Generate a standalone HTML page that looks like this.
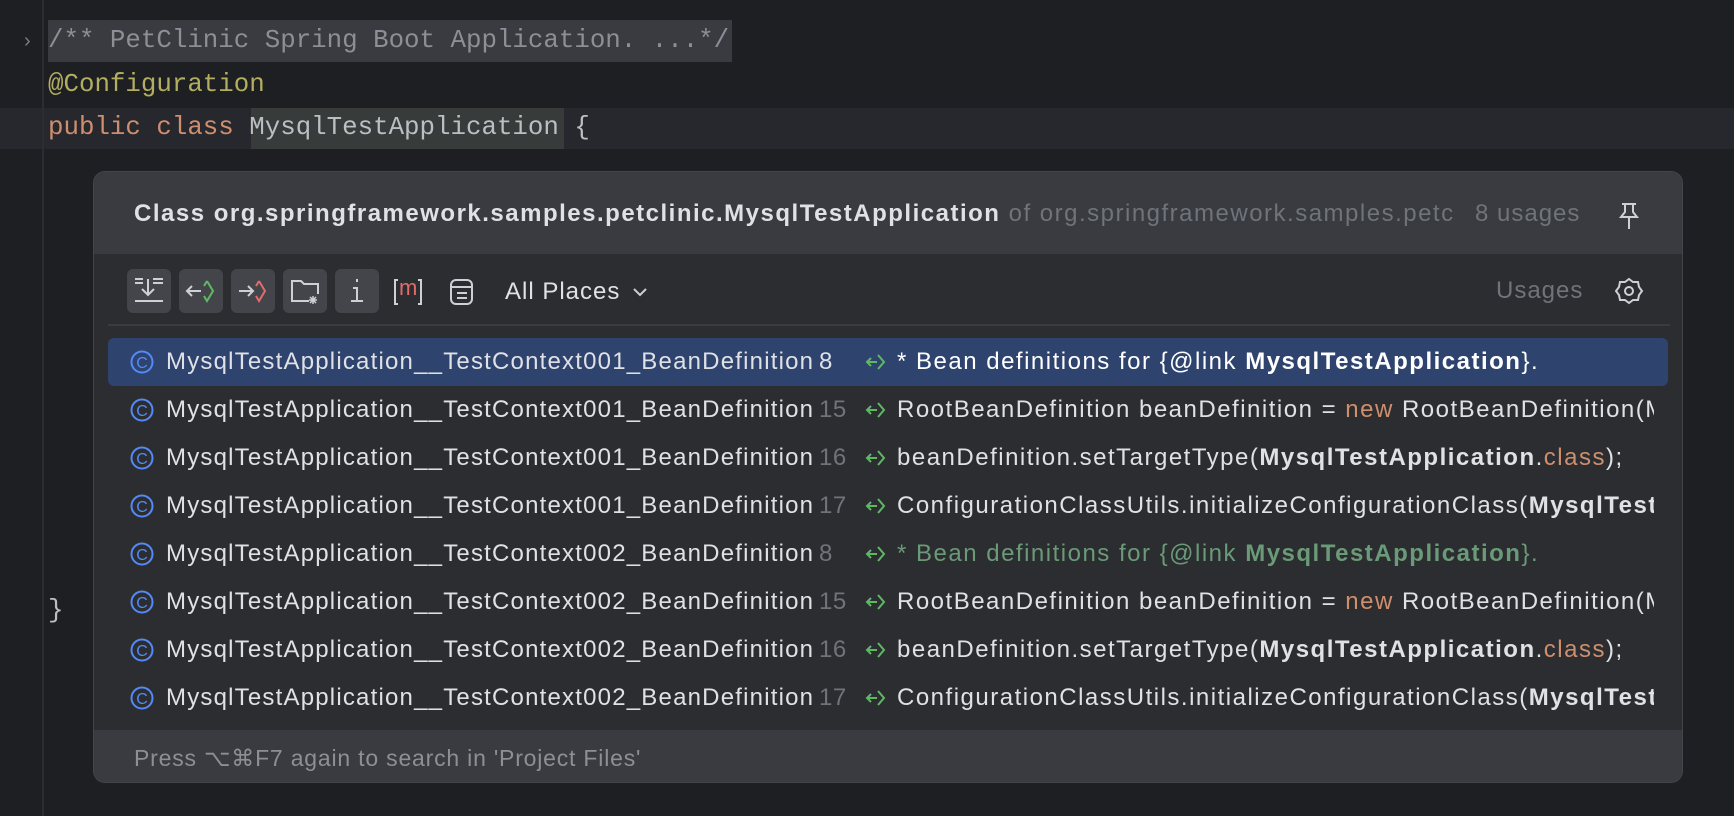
<!DOCTYPE html>
<html><head><meta charset="utf-8"><style>
*{margin:0;padding:0;box-sizing:border-box}
body{width:1734px;height:816px;background:#1e1f22;position:relative;overflow:hidden;font-family:"Liberation Sans",sans-serif}
.abs{position:absolute}
.code{font-family:"Liberation Mono",monospace;font-size:25.8px;white-space:pre;line-height:44px}
.popup{left:93px;top:171px;width:1590px;height:612px;background:#2b2d30;border-radius:12px;border:1px solid #43454a;overflow:hidden}
.hdr{left:0;top:0;width:100%;height:82px;background:#393b40}
.btn{top:97px;width:44px;height:44px;background:#43454a;border-radius:6px}
.btn svg{position:absolute;left:0;top:0}
.row{left:14px;width:1560px;height:48px;font-size:24px;line-height:48px;color:#dfe1e5}
.row .ic{position:absolute;left:22px;top:12px}
.row .nm{position:absolute;left:58px;width:648px;overflow:hidden;white-space:nowrap;letter-spacing:1.2px}
.row .ln{position:absolute;left:711px;color:#6f737a;letter-spacing:0.5px}
.row .ar{position:absolute;left:757px;top:13px}
.row .sn{position:absolute;left:789px;width:757px;overflow:hidden;white-space:nowrap;letter-spacing:1.5px}
.row b{color:#dfe1e5}
.k{color:#cf8e6d}
</style></head><body>
<div class="abs" style="left:0;top:108px;width:1734px;height:41px;background:#26282e"></div>
<div class="abs" style="left:42px;top:0;width:2px;height:816px;background:#2b2d30"></div>
<div class="abs" style="left:24px;top:30px;color:#7a7e85;font-size:20px">&#x203A;</div>
<div class="abs" style="left:48px;top:20px;width:684px;height:42px;background:#393b40"></div>
<div class="abs code" style="left:48px;top:19px;color:#8c8f96">/** PetClinic Spring Boot Application. ...*/</div>
<div class="abs code" style="left:48px;top:63px;color:#b3ae60">@Configuration</div>
<div class="abs" style="left:251px;top:108px;width:313px;height:41px;background:#373b39"></div>
<div class="abs code" style="left:48px;top:106px;color:#bcbec4"><span class="k">public class </span>MysqlTestApplication {</div>
<div class="abs code" style="left:48px;top:589px;color:#bcbec4">}</div>

<div class="abs popup">
 <div class="abs hdr"></div>
 <div class="abs" style="left:40px;top:28px;font-size:24px;letter-spacing:1.5px;color:#dfe1e5;white-space:nowrap;width:1319px;overflow:hidden"><b>Class org.springframework.samples.petclinic.MysqlTestApplication</b> <span style="color:#6f737a">of org.springframework.samples.petclinic</span></div>
 <div class="abs" style="left:1381px;top:28px;font-size:24px;letter-spacing:1px;color:#6f737a">8 usages</div>
 <svg class="abs" style="left:1523px;top:30px" width="24" height="30" viewBox="0 0 24 30" fill="none" stroke="#ced0d6" stroke-width="2"><path d="M5 2h14M8 2v8l-4 5h16l-4-5V2M12 15v12"/></svg>

 <div class="abs btn" style="left:33px"><svg width="44" height="44" fill="none" stroke="#ced0d6" stroke-width="2"><path d="M8 10h8M8 14h8M26 10h10M26 14h10M21 10v16M15 20l6 6 6-6M8 32h28"/></svg></div>
 <div class="abs btn" style="left:85px"><svg width="44" height="44" fill="none" stroke-width="2"><path d="M8 22h14M13 17l-5 5 5 5" stroke="#ced0d6"/><path d="M28 12l6 10-6 10-3-5M25 17l3-5" stroke="#5fb865"/></svg></div>
 <div class="abs btn" style="left:137px"><svg width="44" height="44" fill="none" stroke-width="2"><path d="M8 22h14M17 17l5 5-5 5" stroke="#ced0d6"/><path d="M28 12l6 10-6 10-3-5M25 17l3-5" stroke="#e06c6c"/></svg></div>
 <div class="abs btn" style="left:189px"><svg width="44" height="44" fill="none" stroke="#ced0d6" stroke-width="2"><path d="M26 32H9V12h9l3 3h14v10"/><path d="M30 27v8M26 31h8M27 28l6 6M33 28l-6 6" stroke-width="1.5"/></svg></div>
 <div class="abs btn" style="left:241px"><svg width="44" height="44" fill="none" stroke="#ced0d6" stroke-width="2"><path d="M22 10v3M18 19h4v13M16 32h12"/></svg></div>
 <svg class="abs" style="left:298px;top:104px" width="32" height="32" fill="none" stroke="#ced0d6" stroke-width="2"><path d="M6 4H3v24h3M26 4h3v24h-3"/></svg>
 <div class="abs" style="left:305px;top:103px;font-size:22px;color:#e06c6c">m</div>
 <svg class="abs" style="left:353px;top:105px" width="30" height="30" fill="none" stroke="#ced0d6" stroke-width="2"><rect x="4" y="3" width="21" height="24" rx="5"/><path d="M4 10h21M10 16h10M10 21h10"/></svg>
 <div class="abs" style="left:411px;top:106px;font-size:24px;letter-spacing:1px;color:#dfe1e5">All Places</div>
 <svg class="abs" style="left:538px;top:114px" width="16" height="12" fill="none" stroke="#ced0d6" stroke-width="2"><path d="M2 3l6 6 6-6"/></svg>
 <div class="abs" style="left:1402px;top:105px;font-size:24px;letter-spacing:1px;color:#6f737a">Usages</div>
 <svg class="abs" style="left:1520px;top:104px" width="30" height="30" fill="none" stroke="#ced0d6" stroke-width="2"><path d="M15 3l4 3 5 0 1 5 3 4-3 4-1 5-5 0-4 3-4-3-5 0-1-5-3-4 3-4 1-5 5 0z"/><circle cx="15" cy="15" r="4"/></svg>
 <div class="abs" style="left:14px;top:152px;width:1562px;height:2px;background:#393b40"></div>

 <div class="abs row" style="top:166px;background:#2e436e;border-radius:6px">
  <svg class="ic" width="24" height="24"><circle cx="12" cy="12" r="10.5" fill="none" stroke="#548af7" stroke-width="2"/><text x="12" y="18" font-size="16" fill="#548af7" text-anchor="middle" font-family="Liberation Sans">C</text></svg>
  <span class="nm">MysqlTestApplication__TestContext001_BeanDefinitions</span><span class="ln" style="color:#dfe1e5">8</span>
  <svg class="ar" width="22" height="22" fill="none" stroke="#5fb865" stroke-width="2"><path d="M2 11h10M6 7l-4 4 4 4M13 4l6 7-6 7"/></svg>
  <span class="sn" style="color:#fff">* Bean definitions for {@link <b style="color:#fff">MysqlTestApplication</b>}.</span></div>

 <div class="abs row" style="top:214px"><svg class="ic" width="24" height="24"><circle cx="12" cy="12" r="10.5" fill="none" stroke="#548af7" stroke-width="2"/><text x="12" y="18" font-size="16" fill="#548af7" text-anchor="middle" font-family="Liberation Sans">C</text></svg><span class="nm">MysqlTestApplication__TestContext001_BeanDefinitions</span><span class="ln">15</span><svg class="ar" width="22" height="22" fill="none" stroke="#5fb865" stroke-width="2"><path d="M2 11h10M6 7l-4 4 4 4M13 4l6 7-6 7"/></svg><span class="sn">RootBeanDefinition beanDefinition = <span class="k">new</span> RootBeanDefinition(MysqlTestApplication.class);</span></div>

 <div class="abs row" style="top:262px"><svg class="ic" width="24" height="24"><circle cx="12" cy="12" r="10.5" fill="none" stroke="#548af7" stroke-width="2"/><text x="12" y="18" font-size="16" fill="#548af7" text-anchor="middle" font-family="Liberation Sans">C</text></svg><span class="nm">MysqlTestApplication__TestContext001_BeanDefinitions</span><span class="ln">16</span><svg class="ar" width="22" height="22" fill="none" stroke="#5fb865" stroke-width="2"><path d="M2 11h10M6 7l-4 4 4 4M13 4l6 7-6 7"/></svg><span class="sn">beanDefinition.setTargetType(<b>MysqlTestApplication</b>.<span class="k">class</span>);</span></div>

 <div class="abs row" style="top:310px"><svg class="ic" width="24" height="24"><circle cx="12" cy="12" r="10.5" fill="none" stroke="#548af7" stroke-width="2"/><text x="12" y="18" font-size="16" fill="#548af7" text-anchor="middle" font-family="Liberation Sans">C</text></svg><span class="nm">MysqlTestApplication__TestContext001_BeanDefinitions</span><span class="ln">17</span><svg class="ar" width="22" height="22" fill="none" stroke="#5fb865" stroke-width="2"><path d="M2 11h10M6 7l-4 4 4 4M13 4l6 7-6 7"/></svg><span class="sn">ConfigurationClassUtils.initializeConfigurationClass(<b>MysqlTestApplication</b>.class);</span></div>

 <div class="abs row" style="top:358px"><svg class="ic" width="24" height="24"><circle cx="12" cy="12" r="10.5" fill="none" stroke="#548af7" stroke-width="2"/><text x="12" y="18" font-size="16" fill="#548af7" text-anchor="middle" font-family="Liberation Sans">C</text></svg><span class="nm">MysqlTestApplication__TestContext002_BeanDefinitions</span><span class="ln">8</span><svg class="ar" width="22" height="22" fill="none" stroke="#5fb865" stroke-width="2"><path d="M2 11h10M6 7l-4 4 4 4M13 4l6 7-6 7"/></svg><span class="sn" style="color:#6a9a78">* Bean definitions for {@link <b style="color:#6a9a78">MysqlTestApplication</b>}.</span></div>

 <div class="abs row" style="top:406px"><svg class="ic" width="24" height="24"><circle cx="12" cy="12" r="10.5" fill="none" stroke="#548af7" stroke-width="2"/><text x="12" y="18" font-size="16" fill="#548af7" text-anchor="middle" font-family="Liberation Sans">C</text></svg><span class="nm">MysqlTestApplication__TestContext002_BeanDefinitions</span><span class="ln">15</span><svg class="ar" width="22" height="22" fill="none" stroke="#5fb865" stroke-width="2"><path d="M2 11h10M6 7l-4 4 4 4M13 4l6 7-6 7"/></svg><span class="sn">RootBeanDefinition beanDefinition = <span class="k">new</span> RootBeanDefinition(MysqlTestApplication.class);</span></div>

 <div class="abs row" style="top:454px"><svg class="ic" width="24" height="24"><circle cx="12" cy="12" r="10.5" fill="none" stroke="#548af7" stroke-width="2"/><text x="12" y="18" font-size="16" fill="#548af7" text-anchor="middle" font-family="Liberation Sans">C</text></svg><span class="nm">MysqlTestApplication__TestContext002_BeanDefinitions</span><span class="ln">16</span><svg class="ar" width="22" height="22" fill="none" stroke="#5fb865" stroke-width="2"><path d="M2 11h10M6 7l-4 4 4 4M13 4l6 7-6 7"/></svg><span class="sn">beanDefinition.setTargetType(<b>MysqlTestApplication</b>.<span class="k">class</span>);</span></div>

 <div class="abs row" style="top:502px"><svg class="ic" width="24" height="24"><circle cx="12" cy="12" r="10.5" fill="none" stroke="#548af7" stroke-width="2"/><text x="12" y="18" font-size="16" fill="#548af7" text-anchor="middle" font-family="Liberation Sans">C</text></svg><span class="nm">MysqlTestApplication__TestContext002_BeanDefinitions</span><span class="ln">17</span><svg class="ar" width="22" height="22" fill="none" stroke="#5fb865" stroke-width="2"><path d="M2 11h10M6 7l-4 4 4 4M13 4l6 7-6 7"/></svg><span class="sn">ConfigurationClassUtils.initializeConfigurationClass(<b>MysqlTestApplication</b>.class);</span></div>

 <div class="abs" style="left:0;top:558px;width:100%;height:54px;background:#393b40"></div>
 <div class="abs" style="left:40px;top:573px;font-size:23px;letter-spacing:0.8px;color:#8c8f96">Press ⌥⌘F7 again to search in 'Project Files'</div>
</div>
</body></html>
